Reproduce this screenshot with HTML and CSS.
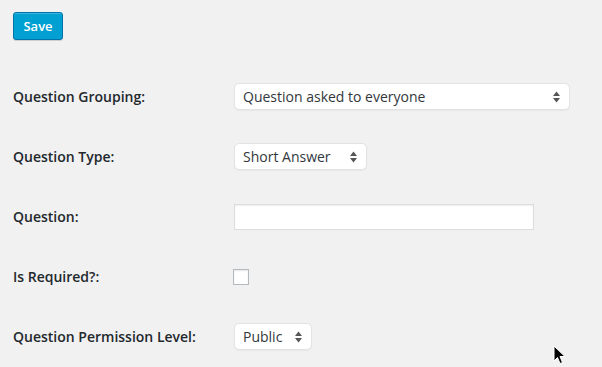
FILE: index.html
```html
<!DOCTYPE html>
<html lang="en">
<head>
    <meta charset="UTF-8">
    <meta name="viewport" content="width=device-width, initial-scale=1.0">
    <title>Edit Question</title>
    <link rel="stylesheet" href="styles.css">
</head>
<body>

    <div class="wrap">
        <button class="button-primary">Save</button>

        <div class="form-table">
            <div class="form-row">
                <label class="form-label">Question Grouping:</label>
                <div class="select-wrap select-wide">
                    <select class="select">
                        <option>Question asked to everyone</option>
                    </select>
                    <svg class="select-arrow" width="7" height="12" viewBox="0 0 7 12"><path d="M3.5 0.5 L7 5 H0 Z M0 7 H7 L3.5 11.5 Z" fill="#555"/></svg>
                </div>
            </div>

            <div class="form-row">
                <label class="form-label">Question Type:</label>
                <div class="select-wrap select-medium">
                    <select class="select">
                        <option>Short Answer</option>
                    </select>
                    <svg class="select-arrow" width="7" height="12" viewBox="0 0 7 12"><path d="M3.5 0.5 L7 5 H0 Z M0 7 H7 L3.5 11.5 Z" fill="#555"/></svg>
                </div>
            </div>

            <div class="form-row">
                <label class="form-label">Question:</label>
                <input class="text-input" type="text">
            </div>

            <div class="form-row">
                <label class="form-label">Is Required?:</label>
                <span class="checkbox"></span>
            </div>

            <div class="form-row">
                <label class="form-label">Question Permission Level:</label>
                <div class="select-wrap select-small">
                    <select class="select">
                        <option>Public</option>
                    </select>
                    <svg class="select-arrow" width="7" height="12" viewBox="0 0 7 12"><path d="M3.5 0.5 L7 5 H0 Z M0 7 H7 L3.5 11.5 Z" fill="#555"/></svg>
                </div>
            </div>
        </div>
    </div>

    <svg class="mouse-pointer" width="13" height="20" viewBox="0 0 13 20"><path d="M1 1 V16 L4.5 12.5 L7 18.5 L9.5 17.5 L7 11.5 H12 Z" fill="#000" stroke="#fff" stroke-width="1"/></svg>

</body>
</html>
```

FILE: styles.css
```css
* {
    margin: 0;
    padding: 0;
    box-sizing: border-box;
}
body {
    background: #f1f1f1;
    font-family: "Open Sans", "Liberation Sans", sans-serif;
    color: #444;
    overflow: hidden;
    position: relative;
    height: 100vh;
}
.wrap {
    padding: 12px 13px;
}
.button-primary {
    display: block;
    width: 50px;
    height: 28px;
    background: #00a0d2;
    border: 1px solid #0073aa;
    border-radius: 3px;
    box-shadow: inset 0 1px 0 rgba(120, 200, 230, 0.5), 0 1px 0 rgba(0, 0, 0, 0.15);
    color: #fff;
    font-family: "Open Sans", "Liberation Sans", sans-serif;
    font-size: 13px;
    font-weight: 600;
    cursor: pointer;
}

.form-table {
    margin-top: 43px;
    display: flex;
    flex-direction: column;
    gap: 33px;
}
.form-row {
    display: flex;
    align-items: center;
    height: 27px;
}
.form-label {
    width: 221px;
    flex-shrink: 0;
    font-size: 14px;
    font-weight: 600;
    color: #23282d;
}

.select-wrap {
    position: relative;
    height: 27px;
}
.select-wide {
    width: 336px;
}
.select-medium {
    width: 133px;
}
.select-small {
    width: 78px;
}
.select {
    appearance: none;
    -webkit-appearance: none;
    width: 100%;
    height: 100%;
    background: #fff;
    border: 1px solid #e3e3e3;
    border-radius: 5px;
    padding: 0 24px 0 8px;
    font-family: "Open Sans", "Liberation Sans", sans-serif;
    font-size: 14px;
    color: #32373c;
    box-shadow: 0 1px 1px rgba(0, 0, 0, 0.04);
}
.select-arrow {
    position: absolute;
    right: 10px;
    top: 8px;
    pointer-events: none;
}

.text-input {
    width: 300px;
    height: 26px;
    background: #fff;
    border: 1px solid #ddd;
    box-shadow: inset 0 1px 2px rgba(0, 0, 0, 0.07);
    font-size: 14px;
}
.checkbox {
    display: block;
    width: 16px;
    height: 16px;
    margin-left: -1px;
    background: #fff;
    border: 1px solid #b4b9be;
    box-shadow: inset 0 1px 2px rgba(0, 0, 0, 0.1);
}

.mouse-pointer {
    position: absolute;
    left: 553px;
    top: 345px;
}
```
